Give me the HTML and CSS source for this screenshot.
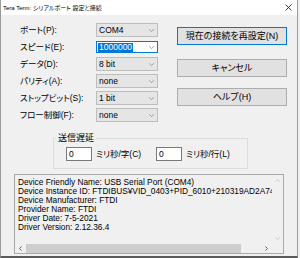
FILE: index.html
```html
<!DOCTYPE html>
<html lang="ja">
<head>
<meta charset="utf-8">
<link rel="stylesheet" href="styles.css">
</head>
<body>
<div class="window">
  <div class="titlebar">
    <span class="title">Tera Term: シリアルポート 設定と接続</span>
    <svg class="close" viewBox="0 0 7 7"><path d="M0.5 0.5L6.5 6.5M6.5 0.5L0.5 6.5" stroke="#222" stroke-width="0.9" fill="none"/></svg>
  </div>
  <div class="body">
    <div class="top">
      <div class="form">
        <span class="lbl">ポート(P):</span>
        <div class="combo"><span>COM4</span><svg class="chev" viewBox="0 0 5 3"><path d="M0.3 0.3L2.5 2.6L4.7 0.3" stroke="#8a8a8a" stroke-width="0.8" fill="none"/></svg></div>
        <span class="lbl">スピード(E):</span>
        <div class="combo edit"><span class="sel">1000000</span><svg class="chev" viewBox="0 0 5 3"><path d="M0.3 0.3L2.5 2.6L4.7 0.3" stroke="#8a8a8a" stroke-width="0.8" fill="none"/></svg></div>
        <span class="lbl">データ(D):</span>
        <div class="combo"><span>8 bit</span><svg class="chev" viewBox="0 0 5 3"><path d="M0.3 0.3L2.5 2.6L4.7 0.3" stroke="#8a8a8a" stroke-width="0.8" fill="none"/></svg></div>
        <span class="lbl">パリティ(A):</span>
        <div class="combo"><span>none</span><svg class="chev" viewBox="0 0 5 3"><path d="M0.3 0.3L2.5 2.6L4.7 0.3" stroke="#8a8a8a" stroke-width="0.8" fill="none"/></svg></div>
        <span class="lbl">ストップビット(S):</span>
        <div class="combo"><span>1 bit</span><svg class="chev" viewBox="0 0 5 3"><path d="M0.3 0.3L2.5 2.6L4.7 0.3" stroke="#8a8a8a" stroke-width="0.8" fill="none"/></svg></div>
        <span class="lbl">フロー制御(F):</span>
        <div class="combo"><span>none</span><svg class="chev" viewBox="0 0 5 3"><path d="M0.3 0.3L2.5 2.6L4.7 0.3" stroke="#8a8a8a" stroke-width="0.8" fill="none"/></svg></div>
      </div>
      <div class="buttons">
        <button class="btn default">現在の接続を再設定(N)</button>
        <button class="btn cancel">キャンセル</button>
        <button class="btn help">ヘルプ(H)</button>
      </div>
    </div>
    <fieldset class="delay">
      <legend>送信遅延</legend>
      <div class="delay-row">
        <div class="delay-item"><span class="num">0</span><span>ミリ秒/字(C)</span></div>
        <div class="delay-item"><span class="num">0</span><span>ミリ秒/行(L)</span></div>
      </div>
    </fieldset>
    <div class="listbox">
      <div class="lines">
        <div>Device Friendly Name: USB Serial Port (COM4)</div>
        <div>Device Instance ID: FTDIBUS¥VID_0403+PID_6010+210319AD2A74B¥0000</div>
        <div>Device Manufacturer: FTDI</div>
        <div>Provider Name: FTDI</div>
        <div>Driver Date: 7-5-2021</div>
        <div>Driver Version: 2.12.36.4</div>
      </div>
      <div class="vscroll">
        <svg class="varrow" viewBox="0 0 5 3"><path d="M0.4 2.6L2.5 0.4L4.6 2.6" stroke="#c2c2c2" stroke-width="0.8" fill="none"/></svg>
        <svg class="varrow" viewBox="0 0 5 3"><path d="M0.4 0.4L2.5 2.6L4.6 0.4" stroke="#c2c2c2" stroke-width="0.8" fill="none"/></svg>
      </div>
      <div class="hscroll">
        <div class="harrow"><svg class="hicon" viewBox="0 0 3 5"><path d="M2.6 0.4L0.5 2.5L2.6 4.6" stroke="#555" stroke-width="0.9" fill="none"/></svg></div>
        <div class="thumb"></div>
        <div class="spacer"></div>
        <div class="harrow"><svg class="hicon" viewBox="0 0 3 5"><path d="M0.4 0.4L2.5 2.5L0.4 4.6" stroke="#555" stroke-width="0.9" fill="none"/></svg></div>
      </div>
      <div class="corner"></div>
    </div>
  </div>
</div>
</body>
</html>
```

FILE: styles.css
```css
html, body {
  margin: 0;
  padding: 0;
  background: #f0f0f0;
}

.window {
  width: 298px;
  height: 258px;
  box-sizing: border-box;
  border-left: 1px solid #9a9a9a;
  border-right: 1px solid #9a9a9a;
  border-bottom: 2px solid #5a5a5a;
  display: flex;
  flex-direction: column;
  background: #f0f0f0;
  font-family: "Liberation Sans", "Noto Sans CJK JP", sans-serif;
  font-feature-settings: "palt" 1;
  color: #000;
}

.titlebar {
  flex: none;
  height: 15px;
  background: #fff;
  display: flex;
  align-items: center;
  justify-content: space-between;
  padding: 0 5px 0 2px;
  font-size: 6px;
  line-height: 1;
}

.close {
  width: 7px;
  height: 7px;
}

.body {
  flex: 1;
  padding-top: 8px;
}

.top {
  display: flex;
  align-items: flex-start;
}

.form {
  margin-left: 19px;
  display: grid;
  grid-template-columns: 76px 62px;
  grid-auto-rows: 14px;
  row-gap: 3px;
  font-size: 8.5px;
}

.lbl {
  display: flex;
  align-items: center;
  line-height: 1;
}

.combo {
  box-sizing: border-box;
  border: 1px solid #bdbdbd;
  background: #e5e5e5;
  display: flex;
  align-items: center;
  justify-content: space-between;
  padding: 0 3px 0 2px;
  font-size: 8.5px;
  line-height: 1;
}

.combo.edit {
  background: #fff;
  border-color: #0078d7;
  height: 12px;
  margin-top: 1px;
  padding-left: 1px;
}

.sel {
  background: #0078d7;
  color: #fff;
  line-height: 9px;
  padding: 0 1px;
}

.chev {
  width: 5px;
  height: 3px;
}

.buttons {
  margin-left: 19px;
  margin-top: 4px;
  display: flex;
  flex-direction: column;
  width: 110px;
}

.btn {
  height: 18px;
  box-sizing: border-box;
  border: 1px solid #adadad;
  background: #e1e1e1;
  font-family: "Liberation Sans", "Noto Sans CJK JP", sans-serif;
  font-feature-settings: "palt" 1;
  font-size: 9px;
  line-height: 1;
  padding: 0;
  margin: 0;
  color: #000;
}

.btn.default {
  border-color: #0078d7;
}

.btn.cancel {
  margin-top: 14px;
}

.btn.help {
  margin-top: 11px;
}

.delay {
  margin: 10px 0 0 52px;
  width: 195px;
  min-width: 0;
  box-sizing: border-box;
  border: 1px solid #dcdcdc;
  padding: 3px 0 7px 2px;
}

.delay legend {
  padding: 0 2px;
  font-size: 9px;
  line-height: 12px;
}

.delay-row {
  display: flex;
  padding-left: 10px;
  font-size: 8.5px;
  line-height: 1;
}

.delay-item {
  display: flex;
  align-items: center;
  width: 90px;
}

.num {
  box-sizing: border-box;
  width: 26px;
  height: 14px;
  background: #fff;
  border: 1px solid #7a7a7a;
  font-size: 8.5px;
  line-height: 12px;
  padding-left: 2px;
  margin-right: 4px;
}

.listbox {
  margin: 5px 0 0 13px;
  width: 270px;
  height: 80px;
  box-sizing: border-box;
  border: 1px solid #a9a9a9;
  background: #f0f0f0;
  display: grid;
  grid-template-columns: 1fr 11px;
  grid-template-rows: 1fr 9px;
}

.lines {
  min-width: 0;
  overflow: hidden;
  white-space: nowrap;
  padding: 3px 0 0 3px;
  font-size: 8.3px;
  line-height: 9px;
}

.vscroll {
  display: flex;
  flex-direction: column;
  justify-content: space-between;
  align-items: center;
  padding: 4px 0 4px;
}

.varrow {
  width: 5px;
  height: 3px;
}

.hscroll {
  display: flex;
  align-items: stretch;
}

.harrow {
  width: 11px;
  display: flex;
  align-items: center;
  justify-content: center;
}

.hicon {
  width: 3px;
  height: 5px;
}

.thumb {
  width: 215px;
  background: #cdcdcd;
}

.spacer {
  flex: 1;
}
```
